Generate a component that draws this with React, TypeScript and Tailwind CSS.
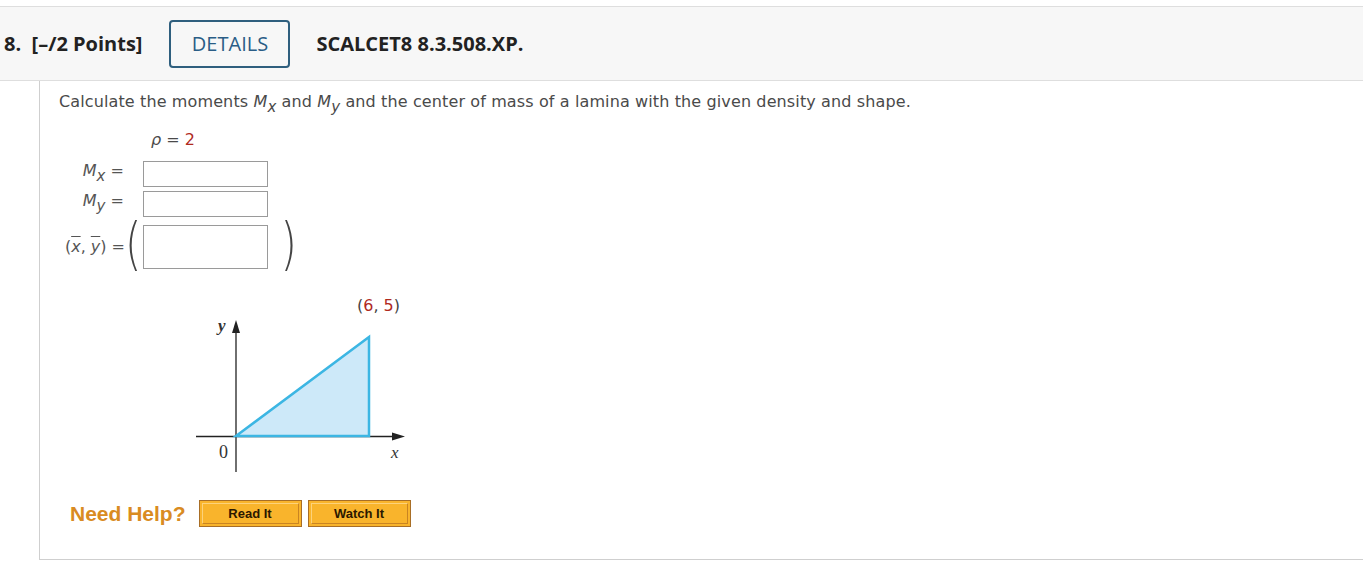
import React from "react";

function Graph() {
  return (
    <svg width="230" height="185" viewBox="190 290 230 185" className="block">
      <polygon points="235,436 368,337 368,436" fill="#cde9f9" />
      <line x1="235" y1="330" x2="235" y2="472" stroke="#222" strokeWidth="1.3" />
      <polygon points="235,320 231,333 239,333" fill="#222" />
      <line x1="195" y1="436.5" x2="396" y2="436.5" stroke="#222" strokeWidth="1.3" />
      <polygon points="404,436.5 391,432.5 391,440.5" fill="#222" />
      <polygon points="235,436 368,337 368,436" fill="none" stroke="#3cb6e3" strokeWidth="2.5" />
      <text x="217" y="331" fontFamily="'Liberation Serif', serif" fontStyle="italic" fontWeight="bold" fontSize="17" fill="#333">y</text>
      <text x="218" y="458" fontFamily="'Liberation Serif', serif" fontSize="18" fill="#333">0</text>
      <text x="390" y="458" fontFamily="'Liberation Serif', serif" fontStyle="italic" fontSize="17" fill="#333">x</text>
      <text x="356" y="311" fontFamily="'DejaVu Sans', Verdana, sans-serif" fontSize="16" fill="#444">
        (<tspan fill="#b02a1e">6</tspan>, <tspan fill="#b02a1e">5</tspan>)
      </text>
    </svg>
  );
}

function HelpButton({ label }: { label: string }) {
  return (
    <div className="h-[27px] w-[103px] border border-[#a86e26] bg-[#f9b42c] p-[2px]">
      <div className="flex h-full w-full items-center justify-center border border-[#c98422] border-t-[#fdd27a] border-l-[#fdd27a] text-[13px] font-bold text-[#2b1800] font-['Liberation_Sans',Arial,sans-serif]">
        {label}
      </div>
    </div>
  );
}

function Sub({ c }: { c: string }) {
  return <span className="relative top-[5px] italic text-[15px]">{c}</span>;
}

export default function App() {
  return (
    <div className="min-h-[566px] w-[1363px] overflow-hidden bg-white">
      <div className="h-[6px]" />
      <div className="flex h-[75px] items-center border-y border-[#dedede] bg-[#f7f7f7] pl-[4px] font-['Open_Sans',sans-serif]">
        <span className="text-[20px] font-bold text-[#222]">8.&nbsp; [–/2 Points]</span>
        <div className="ml-[27px] flex h-[48px] w-[121px] items-center justify-center rounded-[4px] border-2 border-[#2f5f7e] text-[20px] text-[#2a5d86]">
          DETAILS
        </div>
        <span className="ml-[26px] text-[20px] font-bold text-[#222]">SCALCET8 8.3.508.XP.</span>
      </div>
      <div className="ml-[39px] h-[479px] border-b border-l border-[#cfcfcf] pl-[19px] pt-[10px] font-['DejaVu_Sans',Verdana,sans-serif] text-[16px] text-[#4a4a4a]">
        <div className="leading-[22px] tracking-[0.12px]">
          Calculate the moments <i>M</i><Sub c="x" /> and <i>M</i><Sub c="y" /> and the center of mass of a lamina with the given density and shape.
        </div>
        <div className="mt-[18px] pl-[92px] leading-[18px]">
          <i>ρ</i> = <span className="text-[#b02a1e]">2</span>
        </div>
        <div className="mt-[10px] flex flex-col">
          <div className="flex h-[30px] items-center">
            <div className="w-[65px] text-right text-[#555] relative -top-[3px]">
              <i>M</i><Sub c="x" /> =
            </div>
            <div className="ml-[19px] h-[26px] w-[125px] border border-[#9a9a9a]" />
          </div>
          <div className="flex h-[30px] items-center">
            <div className="w-[65px] text-right text-[#555] relative -top-[3px]">
              <i>M</i><Sub c="y" /> =
            </div>
            <div className="ml-[19px] h-[26px] w-[125px] border border-[#9a9a9a]" />
          </div>
          <div className="mt-[6px] flex h-[44px] items-center">
            <div className="w-[66px] text-right text-[#555] text-[16px]">
              (<i className="overline">x</i>, <i className="overline">y</i>) =
            </div>
            <span className="ml-[0px] inline-block scale-y-[1.35] text-[42px] font-extralight leading-none text-[#444] relative -top-[3px]">(</span>
            <div className="ml-[2px] h-[44px] w-[125px] border border-[#9a9a9a]" />
            <span className="ml-[12px] inline-block scale-y-[1.35] text-[42px] font-extralight leading-none text-[#444] relative -top-[3px]">)</span>
          </div>
        </div>
        <div className="ml-[132px] mt-[21px]">
          <Graph />
        </div>
        <div className="mt-[23px] flex items-center pl-[11px]">
          <span className="text-[21px] font-bold text-[#d98b22] font-['Liberation_Sans',Arial,sans-serif]">Need Help?</span>
          <div className="ml-[13px]"><HelpButton label="Read It" /></div>
          <div className="ml-[6px]"><HelpButton label="Watch It" /></div>
        </div>
      </div>
    </div>
  );
}
